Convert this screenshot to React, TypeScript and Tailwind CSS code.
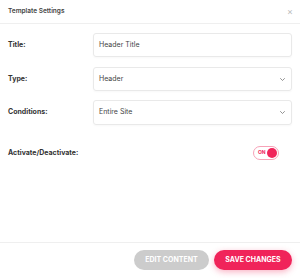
import React from "react";

function Chevron() {
  return (
    <svg width="5" height="3" viewBox="0 0 10 6" fill="none" stroke="#777" strokeWidth="1.6" strokeLinecap="round" strokeLinejoin="round">
      <path d="M1 1l4 4 4-4" />
    </svg>
  );
}

export default function App() {
  return (
    <div className="w-[300px] h-[278px] bg-white flex flex-col text-[#333]" style={{ fontFamily: "Inter, 'Noto Sans', sans-serif" }}>
      <div className="h-[24px] shrink-0 flex items-center justify-between pl-[8px] pr-[7px] border-b border-[#efefef]">
        <span className="text-[6.5px] font-semibold text-[#444]">Template Settings</span>
        <span className="text-[9px] text-[#bbb] leading-none">×</span>
      </div>
      <div className="flex-1 flex flex-col pl-[8px] pr-[8px] pt-[9px]">
        <div className="flex items-center h-[24px]">
          <span className="w-[85px] text-[7px] font-bold text-[#333]">Title:</span>
          <div className="flex-1 h-[24px] border border-[#e9e9e9] rounded-[3px] flex items-center px-[5px] text-[7px] text-[#444] shadow-[0_1px_2px_rgba(0,0,0,0.03)]">Header Title</div>
        </div>
        <div className="flex items-center h-[24px] mt-[10px]">
          <span className="w-[85px] text-[7px] font-bold text-[#333]">Type:</span>
          <div className="flex-1 h-[24px] border border-[#e9e9e9] rounded-[3px] flex items-center justify-between pl-[5px] pr-[6px] text-[7px] text-[#444] shadow-[0_1px_2px_rgba(0,0,0,0.03)]">
            <span>Header</span>
            <Chevron />
          </div>
        </div>
        <div className="flex items-center h-[25px] mt-[9px]">
          <span className="w-[85px] text-[7px] font-bold text-[#333]">Conditions:</span>
          <div className="flex-1 h-[25px] border border-[#e9e9e9] rounded-[3px] flex items-center justify-between pl-[5px] pr-[6px] text-[7px] text-[#444] shadow-[0_1px_2px_rgba(0,0,0,0.03)]">
            <span>Entire Site</span>
            <Chevron />
          </div>
        </div>
        <div className="flex items-center justify-between mt-[21px] pr-[13px]">
          <span className="text-[7px] font-bold text-[#333]">Activate/Deactivate:</span>
          <div className="w-[26px] h-[14px] rounded-full border border-[#f7a3b8] flex items-center justify-between pl-[4px] pr-[1px]">
            <span className="text-[5px] font-bold text-[#f0245a]">ON</span>
            <span className="w-[10px] h-[10px] rounded-full bg-[#f0245a]" />
          </div>
        </div>
      </div>
      <div className="h-[36px] shrink-0 border-t border-[#efefef] flex items-start justify-end gap-[5px] pr-[8px] pt-[7px]">
        <div className="w-[75px] h-[20px] rounded-full bg-[#cccccc] flex items-center justify-center text-[7px] font-bold text-white">EDIT CONTENT</div>
        <div className="w-[78px] h-[20px] rounded-full bg-[#f0245a] flex items-center justify-center text-[7px] font-bold text-white shadow-[0_2px_6px_rgba(240,36,90,0.35)]">SAVE CHANGES</div>
      </div>
    </div>
  );
}
